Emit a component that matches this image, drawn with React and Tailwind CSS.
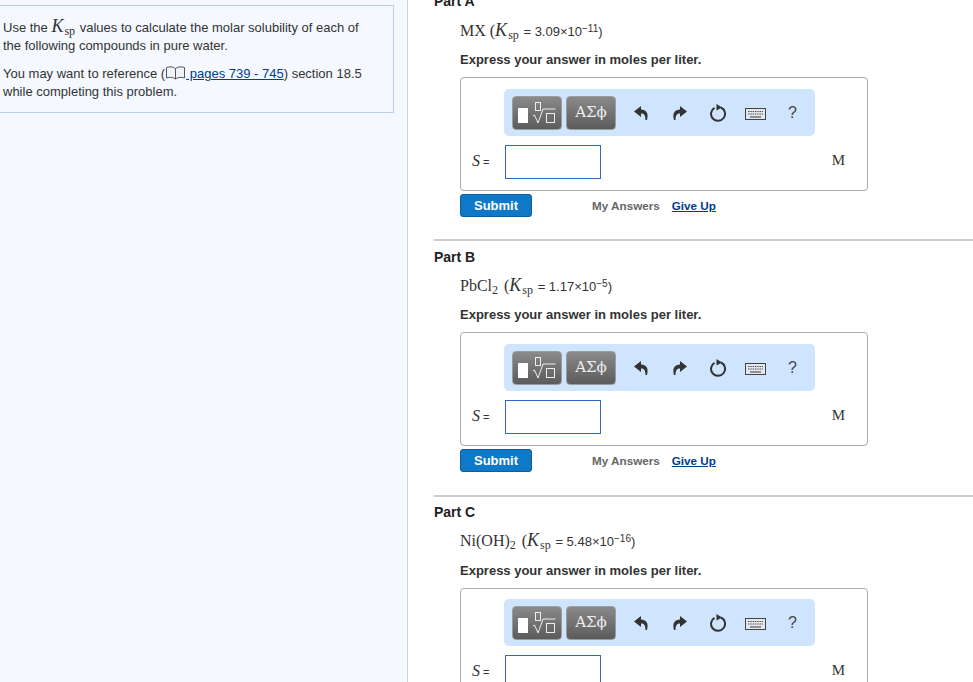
import { Fragment } from "react";

const serif = "font-['Liberation_Serif',serif]";

function Ksp() {
    return (
        <span className={`${serif} text-[18px] leading-none pr-[1px]`}>
            <i>K</i>
            <sub className="text-[12px] leading-none ml-[1px]">sp</sub>
        </span>
    );
}

function MathButton() {
    return (
        <div className="w-[50px] h-[34px] rounded-[4px] bg-gradient-to-b from-[#8a8a8a] to-[#5c5c5c] border border-[#9c9c9c] flex items-center justify-center">
            <svg width="48" height="32" viewBox="0 0 48 32" fill="none">
                <rect x="5" y="11" width="10" height="15" fill="#fff" />
                <rect x="22.500" y="5.500" width="5" height="8" stroke="#eee" strokeWidth="1" />
                <path d="M20 19l1.500 -1 3.500 8 5 -14h12.500" stroke="#eee" strokeWidth="1" />
                <rect x="33.500" y="16.500" width="8" height="9" stroke="#eee" strokeWidth="1" />
            </svg>
        </div>
    );
}

function GreekButton() {
    return (
        <div className="w-[50px] h-[34px] rounded-[4px] bg-gradient-to-b from-[#8a8a8a] to-[#5c5c5c] border border-[#9c9c9c] flex items-center justify-center text-[#ececec] text-[15px] font-['DejaVu_Serif',serif] font-light">
            ΑΣϕ
        </div>
    );
}

function Toolbar() {
    return (
        <div className="ml-[43px] w-[311px] h-[47px] bg-[#cfe4fd] rounded-[5px] flex items-center pl-[8px]">
            <MathButton />
            <div className="w-[4px]" />
            <GreekButton />
            <svg className="ml-[18px]" width="15" height="14" viewBox="0 0 15 14" fill="#333">
                <path d="M7 0L0 5.500 7 11V7.500c3 0 4.500 1.500 4.500 6.500H13c2-7-1-10.500-6-10.500z" />
            </svg>
            <svg className="ml-[23px]" width="15" height="14" viewBox="0 0 15 14" fill="#333">
                <path d="M8 0l7 5.500L8 11V7.500c-3 0-4.500 1.500-4.500 6.500H2c-2-7 1-10.500 6-10.500z" />
            </svg>
            <svg className="ml-[22px]" width="18" height="18" viewBox="0 0 18 18" fill="none">
                <path d="M5.500 3.800a7 7 0 1 0 6.500 -0.300" stroke="#333" strokeWidth="2" />
                <path d="M7.500 0l5.500 3.500-5.500 3z" fill="#333" />
            </svg>
            <svg className="ml-[18px] mt-[3px]" width="21" height="12" viewBox="0 0 21 12" fill="none">
                <rect x="0.500" y="0.500" width="20" height="11" fill="#e4e8ee" stroke="#444" />
                <path d="M3 3.500h15M3 6h15" stroke="#555" strokeWidth="1.200" strokeDasharray="1.500 0.800" />
                <path d="M5 9h11" stroke="#555" strokeWidth="1.200" />
            </svg>
            <span className="ml-[22px] text-[16px] text-[#444] leading-none">?</span>
        </div>
    );
}

function Part({ title, formula, sup, first, last }) {
    return (
        <section className={`text-[13px] ${first ? "h-[255px] pt-[6px]" : "h-[256px]"} ${last ? "pt-[6px]" : "border-b-2 border-[#ccc]"} ${!first && !last ? "pt-[7px]" : ""}`}>
            <h3 className="font-bold text-[14px] text-[#222] leading-[18px]">{title}</h3>
            <div className="pl-[26px]">
                <p className={`${first ? "mt-[9px]" : "mt-[8px]"} h-[24px] leading-[24px] text-[#333] whitespace-nowrap`}>
                    <span className={`${serif} text-[16px]`}>{formula} (</span>
                    <Ksp /> = {sup.base}×10
                    <sup className="text-[10px] top-[-4px]">{sup.exp}</sup>
                    )
                </p>
                <p className={`${last ? "mt-[10px]" : "mt-[9px]"} font-bold text-[#333] leading-[16px]`}>Express your answer in moles per liter.</p>
                <div className={`mt-[9px] w-[408px] h-[114px] border border-[#aaa] rounded-[4px] ${last ? "pt-[10px]" : "pt-[11px]"}`}>
                    <Toolbar />
                    <div className="mt-[9px] flex items-center h-[34px]">
                        <span className="ml-[11px] mb-[3px] w-[33px] text-[#333] text-[11px] whitespace-nowrap">
                            <i className={`${serif} text-[16px]`}>S</i> =
                        </span>
                        <div className="w-[96px] h-[34px] border border-[#2a6ac4] bg-white" />
                        <span className={`ml-auto mr-[22px] mb-[3px] ${serif} text-[15px] text-[#333]`}>M</span>
                    </div>
                </div>
                <div className="mt-[3px] flex items-center h-[23px] font-bold text-[11.700px]">
                    <button className="w-[72px] h-[23px] rounded-[3px] bg-[#0e78c9] border border-[#0b5f9e] text-white text-[13px] font-bold">
                        Submit
                    </button>
                    <span className="ml-[60px] text-[#666]">My Answers</span>
                    <a className="ml-[12px] text-[#003d8f] underline" href="#">Give Up</a>
                </div>
            </div>
        </section>
    );
}

const parts = [
    { title: "Part A", formula: "MX", sup: { base: "3.09", exp: "−11" }, first: true },
    {
        title: "Part B",
        formula: <Fragment>PbCl<sub className="text-[12px] pr-[2px]">2</sub></Fragment>,
        sup: { base: "1.17", exp: "−5" },
    },
    {
        title: "Part C",
        formula: <Fragment>Ni(OH)<sub className="text-[12px] pr-[2px]">2</sub></Fragment>,
        sup: { base: "5.48", exp: "−16" },
        last: true,
    },
];

export default function App() {
    return (
        <div className="flex h-[682px] w-[973px] overflow-hidden bg-white font-['Liberation_Sans',sans-serif] text-[13px] text-[#333]">
            <aside className="w-[408px] shrink-0 bg-[#f5f9ff] border-r border-[#c5d3e3] pt-[5px]">
                <div className="w-[394px] h-[108px] border-t border-b border-r border-[#bccfe2] pl-[3px] pt-[11px]">
                    <p className="leading-[18px]">
                        Use the <Ksp /> values to calculate the molar solubility of each of
                        <br />
                        the following compounds in pure water.
                    </p>
                    <p className="mt-[10px] leading-[18px] whitespace-nowrap">
                        You may want to reference (
                        <svg className="inline-block align-[-2px]" width="21" height="15" viewBox="0 0 21 15" fill="#eef3fa" stroke="#555">
                            <path d="M10.500 3.500C8 1.500 4.500 1.500 1.500 2.500V13C4.500 12 8 12 10.500 14 13 12 16.500 12 19.500 13V2.500C16.500 1.500 13 1.500 10.500 3.500zM10.500 3.500V14" />
                        </svg>
                        <a className="text-[#003d8f] underline" href="#"> pages 739 - 745</a>) section 18.5
                        <br />
                        while completing this problem.
                    </p>
                </div>
            </aside>
            <main className="flex-1 pl-[26px] -mt-[14px]">
                {parts.map((p) => (
                    <Part key={p.title} {...p} />
                ))}
            </main>
        </div>
    );
}
